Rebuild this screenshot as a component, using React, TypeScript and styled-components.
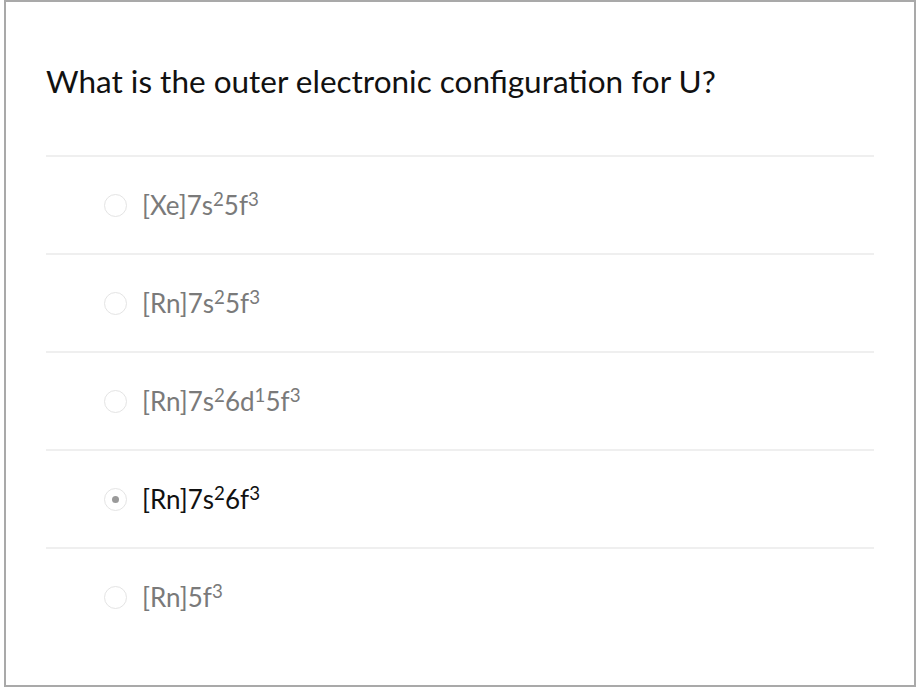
import styled, { createGlobalStyle } from "styled-components";
import { FC, ReactNode } from "react";

const Global = createGlobalStyle`
    body {
        margin: 0;
        background: #fff;
        font-family: Lato, "Open Sans", sans-serif;
    }
`;

const Card = styled.section`
    box-sizing: border-box;
    margin-left: 4px;
    width: 912px;
    height: 687px;
    border: 2px solid #a9a9a9;
    padding: 0 40px;
`;

const Question = styled.h1`
    margin: 0;
    padding: 60px 0 55px;
    font-size: 31.5px;
    font-weight: 400;
    line-height: 38px;
    color: #111;
`;

const Row = styled.label`
    display: flex;
    align-items: center;
    height: 96px;
    border-top: 2px solid #efefef;
    padding-left: 58px;
`;

const Radio = styled.span<{ checked?: boolean }>`
    box-sizing: border-box;
    width: 23px;
    height: 23px;
    border-radius: 50%;
    border: 1px solid #e4e4e4;
    display: flex;
    align-items: center;
    justify-content: center;
    margin-right: 15px;
    &::after {
        content: "";
        width: 7px;
        height: 7px;
        border-radius: 50%;
        background: ${(p) => (p.checked ? "#9a9a9a" : "transparent")};
    }
`;

const Answer = styled.span<{ checked?: boolean }>`
    font-size: 26px;
    color: ${(p) => (p.checked ? "#111" : "#7a7a7a")};
    sup {
        font-size: 0.72em;
        line-height: 0;
        vertical-align: 0.5em;
    }
`;

const Option: FC<{ checked?: boolean; children: ReactNode }> = ({ checked, children }) => (
    <Row>
        <Radio checked={checked} />
        <Answer checked={checked}>{children}</Answer>
    </Row>
);

export default function App() {
    return (
        <>
            <Global />
            <Card>
                <Question>What is the outer electronic configuration for U?</Question>
                <Option>
                    [Xe]7s<sup>2</sup>5f<sup>3</sup>
                </Option>
                <Option>
                    [Rn]7s<sup>2</sup>5f<sup>3</sup>
                </Option>
                <Option>
                    [Rn]7s<sup>2</sup>6d<sup>1</sup>5f<sup>3</sup>
                </Option>
                <Option checked>
                    [Rn]7s<sup>2</sup>6f<sup>3</sup>
                </Option>
                <Option>
                    [Rn]5f<sup>3</sup>
                </Option>
            </Card>
        </>
    );
}
